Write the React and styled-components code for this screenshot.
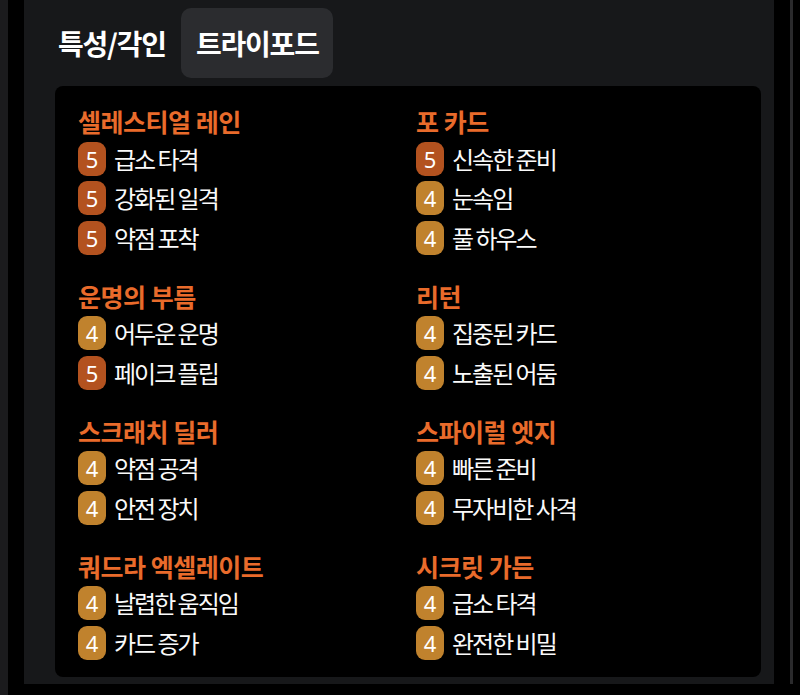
import styled, { createGlobalStyle } from 'styled-components';

const GlobalStyle = createGlobalStyle`
  html, body {
    margin: 0;
    padding: 0;
    background: #000;
  }
  body {
    font-family: 'Noto Sans CJK KR', 'Noto Sans', sans-serif;
    color: #fff;
  }
`;

const tripods = [
  {
    name: '셀레스티얼 레인',
    items: [
      { level: 5, name: '급소 타격' },
      { level: 5, name: '강화된 일격' },
      { level: 5, name: '약점 포착' },
    ],
  },
  {
    name: '포 카드',
    items: [
      { level: 5, name: '신속한 준비' },
      { level: 4, name: '눈속임' },
      { level: 4, name: '풀 하우스' },
    ],
  },
  {
    name: '운명의 부름',
    items: [
      { level: 4, name: '어두운 운명' },
      { level: 5, name: '페이크 플립' },
    ],
  },
  {
    name: '리턴',
    items: [
      { level: 4, name: '집중된 카드' },
      { level: 4, name: '노출된 어둠' },
    ],
  },
  {
    name: '스크래치 딜러',
    items: [
      { level: 4, name: '약점 공격' },
      { level: 4, name: '안전 장치' },
    ],
  },
  {
    name: '스파이럴 엣지',
    items: [
      { level: 4, name: '빠른 준비' },
      { level: 4, name: '무자비한 사격' },
    ],
  },
  {
    name: '쿼드라 엑셀레이트',
    items: [
      { level: 4, name: '날렵한 움직임' },
      { level: 4, name: '카드 증가' },
    ],
  },
  {
    name: '시크릿 가든',
    items: [
      { level: 4, name: '급소 타격' },
      { level: 4, name: '완전한 비밀' },
    ],
  },
];

const tabs = ['특성/각인', '트라이포드'];

const App = () => {
  return (
    <>
      <GlobalStyle />
      <Screen>
        <EdgeStrip />
        <Panel>
          <TabBar>
            {tabs.map((tab, i) => (
              <Tab key={tab} className={i === 1 ? 'active' : null}>
                {tab}
              </Tab>
            ))}
          </TabBar>
          <TripodBox>
            {tripods.map((skill) => (
              <SkillGroup key={skill.name}>
                <SkillTitle>{skill.name}</SkillTitle>
                {skill.items.map((item, i) => (
                  <TripodRow key={i}>
                    <LevelBadge $level={item.level}>{item.level}</LevelBadge>
                    <TripodName>{item.name}</TripodName>
                  </TripodRow>
                ))}
              </SkillGroup>
            ))}
          </TripodBox>
        </Panel>
        <ScrollLine />
      </Screen>
    </>
  );
};

export default App;

const Screen = styled.div`
  display: flex;
  align-items: flex-start;
  width: 800px;
  height: 695px;
  overflow: hidden;
  background: #000;
`;

const EdgeStrip = styled.div`
  width: 8px;
  height: 695px;
  background: #1b1b1d;
  margin-right: 16px;
`;

const Panel = styled.section`
  width: 750px;
  height: 684px;
  box-sizing: border-box;
  background: #17181a;
  padding: 8px 13px 7px 31px;
  display: flex;
  flex-direction: column;
`;

const TabBar = styled.nav`
  display: flex;
  gap: 1px;
  height: 70px;
  margin-left: -12px;
`;

const Tab = styled.div`
  display: flex;
  align-items: center;
  padding: 0 14px 0 15px;
  border-radius: 10px;
  font-size: 28px;
  font-weight: 700;
  letter-spacing: -1.2px;
  color: #fff;

  &.active {
    background: #2b2c2f;
  }
`;

const TripodBox = styled.div`
  margin-top: 8px;
  flex: 1;
  background: #000;
  border-radius: 8px;
  padding: 20px 23px 0 23px;
  display: grid;
  grid-template-columns: 338px 1fr;
  align-content: start;
  row-gap: 23px;
`;

const SkillGroup = styled.div`
  display: flex;
  flex-direction: column;
`;

const SkillTitle = styled.h3`
  margin: 0 0 3px 0;
  height: 30px;
  line-height: 30px;
  font-size: 25px;
  font-weight: 700;
  letter-spacing: -0.5px;
  color: #e96b2b;
`;

const TripodRow = styled.div`
  display: flex;
  align-items: center;
  height: 39.5px;
  gap: 8px;
`;

const LevelBadge = styled.span`
  width: 28px;
  height: 34px;
  border-radius: 9px;
  display: flex;
  align-items: center;
  justify-content: center;
  background: ${(p) => (p.$level === 5 ? '#b3521f' : '#c0822d')};
  color: #fff;
  font-family: 'Noto Sans', 'Inter', sans-serif;
  font-size: 22px;
  line-height: 1;
`;

const TripodName = styled.span`
  font-size: 24px;
  letter-spacing: -2px;
  color: #fafafa;
  line-height: 1;
`;

const ScrollLine = styled.div`
  width: 3px;
  height: 684px;
  margin-left: 16px;
  background: #2a2a2c;
`;
